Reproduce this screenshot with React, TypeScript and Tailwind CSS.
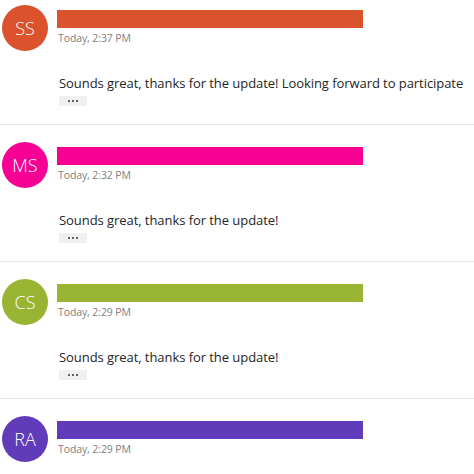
import React from "react";

interface Post {
  initials: string;
  color: string;
  time: string;
  text?: string;
}

const posts: Post[] = [
  {
    initials: "SS",
    color: "bg-[#da532c]",
    time: "Today, 2:37 PM",
    text: "Sounds great, thanks for the update! Looking forward to participate",
  },
  {
    initials: "MS",
    color: "bg-[#f70094]",
    time: "Today, 2:32 PM",
    text: "Sounds great, thanks for the update!",
  },
  {
    initials: "CS",
    color: "bg-[#99b433]",
    time: "Today, 2:29 PM",
    text: "Sounds great, thanks for the update!",
  },
  {
    initials: "RA",
    color: "bg-[#603cba]",
    time: "Today, 2:29 PM",
  },
];

const MoreButton = () => (
  <div className="mt-[4px] flex h-[10px] w-[28px] items-center justify-center gap-[2px] bg-[#f0f0f0]">
    <span className="h-[2px] w-[2px] rounded-full bg-[#333]" />
    <span className="h-[2px] w-[2px] rounded-full bg-[#333]" />
    <span className="h-[2px] w-[2px] rounded-full bg-[#333]" />
  </div>
);

const PostRow = ({ post, first }: { post: Post; first: boolean }) => (
  <div
    className={
      first
        ? "flex border-b border-[#e8e8e8] pl-[2px] pt-[5px] pb-[18px]"
        : "flex border-b border-[#e8e8e8] pl-[2px] pt-[17px] pb-[18px]"
    }
  >
    <div
      className={`flex h-[46px] w-[46px] shrink-0 items-center justify-center rounded-full text-[18px] font-light text-white ${post.color}`}
    >
      {post.initials}
    </div>
    <div className="ml-[9px] flex flex-col pt-[5px]">
      <div className={`h-[18px] w-[306px] ${post.color}`} />
      <div className="mt-[3px] pl-[1px] text-[10.5px] leading-[14px] tracking-[-0.1px] text-[#808080]">
        {post.time}
      </div>
      {post.text && (
        <div className="pl-[2px]">
          <div className="mt-[29px] whitespace-nowrap text-[13px] leading-[18px] tracking-[-0.06px] text-[#252525]">
            {post.text}
          </div>
          <MoreButton />
        </div>
      )}
    </div>
  </div>
);

export default function App() {
  return (
    <div
      className="h-[474px] w-[474px] overflow-hidden bg-white"
      style={{ fontFamily: '"Open Sans", "Noto Sans", sans-serif' }}
    >
      {posts.map((p, i) => (
        <PostRow key={i} post={p} first={i === 0} />
      ))}
    </div>
  );
}
